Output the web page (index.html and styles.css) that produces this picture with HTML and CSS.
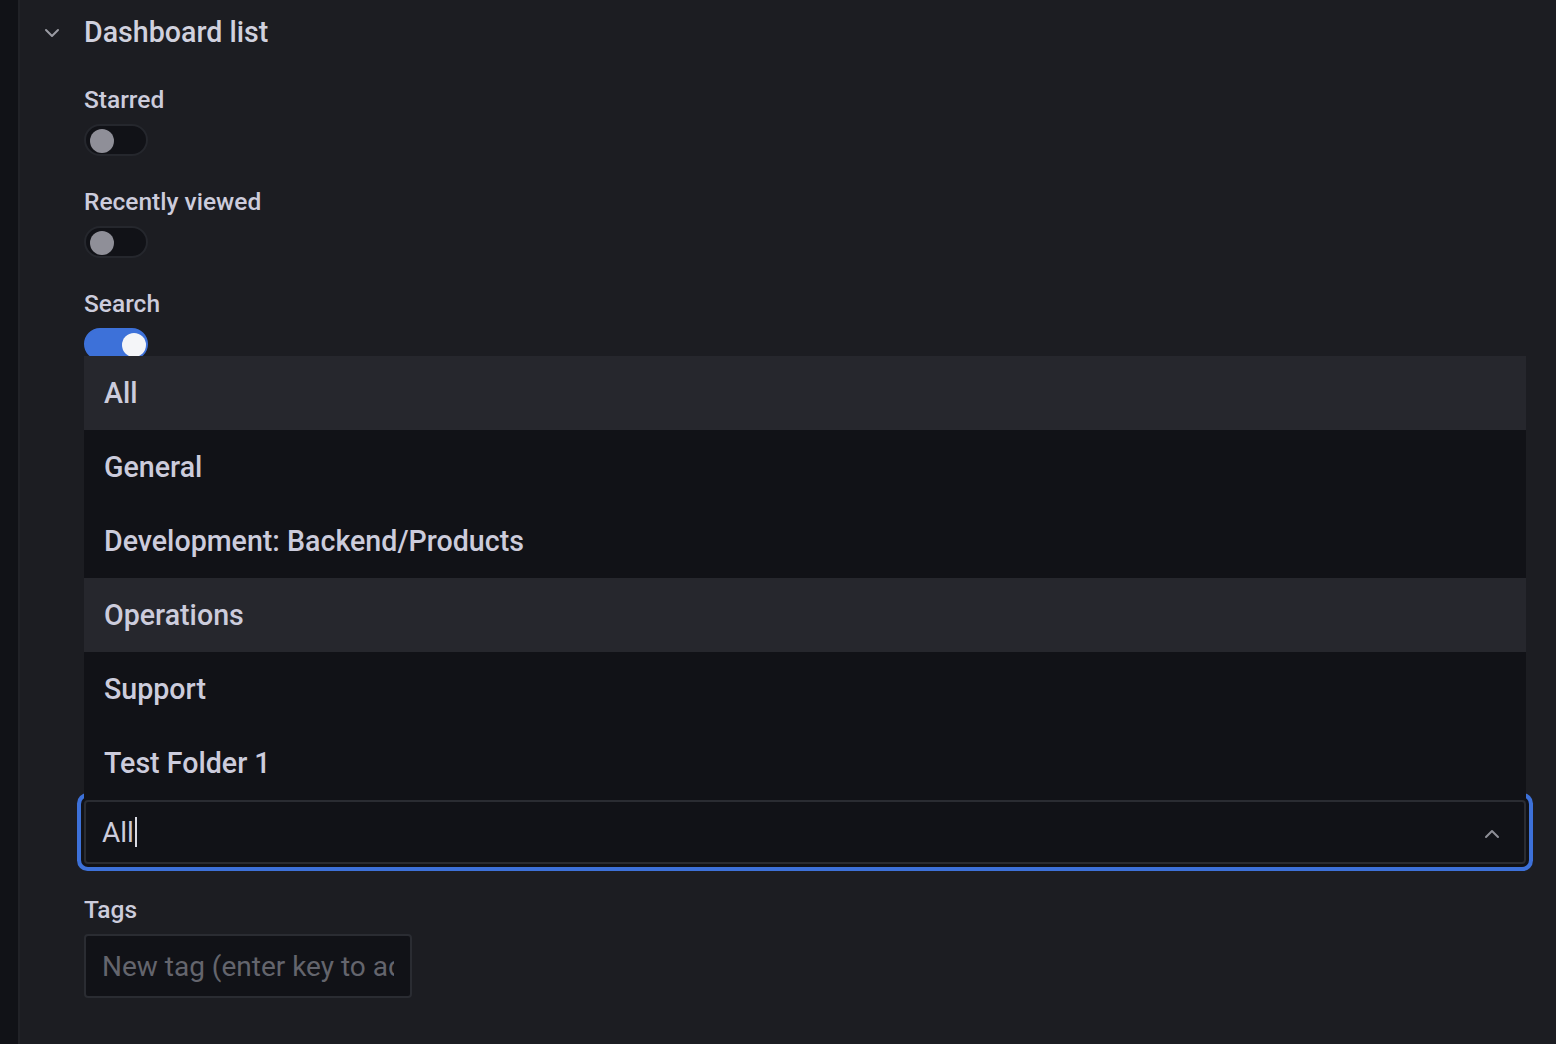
FILE: index.html
```html
<!DOCTYPE html>
<html lang="en">
<head>
<meta charset="utf-8">
<title>Dashboard list options</title>
<link rel="stylesheet" href="styles.css">
</head>
<body>
<div class="layout">
  <aside class="rail"></aside>
  <main class="pane">
    <header class="section-head">
      <svg class="chev-down" viewBox="0 0 16 10" width="16" height="10" aria-hidden="true">
        <path d="M2 2l6 6 6-6" fill="none" stroke="currentColor" stroke-width="2" stroke-linecap="round" stroke-linejoin="round"/>
      </svg>
      <h2 class="section-title">Dashboard list</h2>
    </header>

    <div class="fields">
      <div class="field">
        <label class="field-label">Starred</label>
        <span class="switch"><span class="knob"></span></span>
      </div>
      <div class="field">
        <label class="field-label">Recently viewed</label>
        <span class="switch"><span class="knob"></span></span>
      </div>
      <div class="field">
        <label class="field-label">Search</label>
        <span class="switch on"><span class="knob"></span></span>
      </div>
      <div class="field folder">
        <ul class="menu">
          <li class="option active">All</li>
          <li class="option">General</li>
          <li class="option">Development: Backend/Products</li>
          <li class="option active">Operations</li>
          <li class="option">Support</li>
          <li class="option">Test Folder 1</li>
        </ul>
        <div class="input focused">
          <span class="value">All</span><span class="caret"></span>
          <svg class="chev-up" viewBox="0 0 16 10" width="16" height="10" aria-hidden="true">
            <path d="M2 8l6-6 6 6" fill="none" stroke="currentColor" stroke-width="2" stroke-linecap="round" stroke-linejoin="round"/>
          </svg>
        </div>
      </div>
      <div class="field">
        <label class="field-label">Tags</label>
        <div class="input tags"><span class="placeholder">New tag (enter key to add)</span></div>
      </div>
    </div>
  </main>
</div>
</body>
</html>
```

FILE: styles.css
```css
* { box-sizing: border-box; }

html, body {
  margin: 0;
  height: 100%;
  background: #1c1d22;
  color: #ccccdc;
  font-family: Roboto, "Liberation Sans", sans-serif;
  overflow: hidden;
}

.layout {
  display: flex;
  height: 100%;
}

.rail {
  width: 20px;
  flex: none;
  background: #111217;
  border-right: 2px solid #212227;
}

.pane {
  flex: 1;
  padding: 16px 30px 0 24px;
}

.section-head {
  display: flex;
  align-items: center;
  height: 32px;
}

.chev-down {
  color: #9a9ba3;
  margin-top: 1px;
  margin-right: 24px;
}

.section-title {
  margin: 0;
  font-size: 28.6px;
  line-height: 34px;
  font-weight: 500;
  color: #d0d1de;
}

.fields {
  margin-left: 40px;
  padding-top: 39px;
  display: flex;
  flex-direction: column;
  gap: 33px;
}

.field {
  display: flex;
  flex-direction: column;
  align-items: flex-start;
  gap: 11px;
}

.field-label {
  font-size: 24.5px;
  line-height: 26px;
  font-weight: 500;
  color: #ccccdc;
}

/* toggle switch */
.switch {
  position: relative;
  width: 64px;
  height: 32px;
  border-radius: 16px;
  background: #111217;
  border: 2px solid #25272d;
}
.switch .knob {
  position: absolute;
  top: 3px;
  left: 4px;
  width: 24px;
  height: 24px;
  border-radius: 50%;
  background: #8f8f98;
}
.switch.on {
  background: #3d71d9;
  border-color: #3d71d9;
}
.switch.on .knob {
  left: auto;
  right: 0;
  background: #f4f5f8;
}

/* folder picker: open option list sits right above the input */
.field.folder {
  gap: 0;
}
.menu {
  position: relative;
  z-index: 2;
  width: 100%;
  margin: -37px 0 0;
  padding: 0;
  list-style: none;
  background: #111217;
}
.option {
  height: 74px;
  display: flex;
  align-items: center;
  padding-left: 20px;
  font-size: 28.6px;
  font-weight: 500;
  color: #ccccdc;
}
.option.active {
  background: #26272d;
}

/* text inputs */
.input {
  position: relative;
  display: flex;
  align-items: center;
  width: 100%;
  height: 64px;
  padding: 0 16px;
  background: #111217;
  border: 2px solid #2a2c32;
  border-radius: 4px;
  font-size: 28px;
  color: #ccccdc;
}
.input.focused {
  box-shadow: 0 0 0 3px #111217, 0 0 0 7px #3d71d9;
}
.input .caret {
  display: inline-block;
  width: 2px;
  height: 30px;
  margin-left: 1px;
  background: #d8d9e2;
}
.chev-up {
  position: absolute;
  right: 24px;
  top: 27px;
  color: #8e8f97;
}

.input.tags {
  width: 328px;
}
.placeholder {
  flex: 1;
  min-width: 0;
  overflow: hidden;
  white-space: nowrap;
  color: #64656d;
}
```
